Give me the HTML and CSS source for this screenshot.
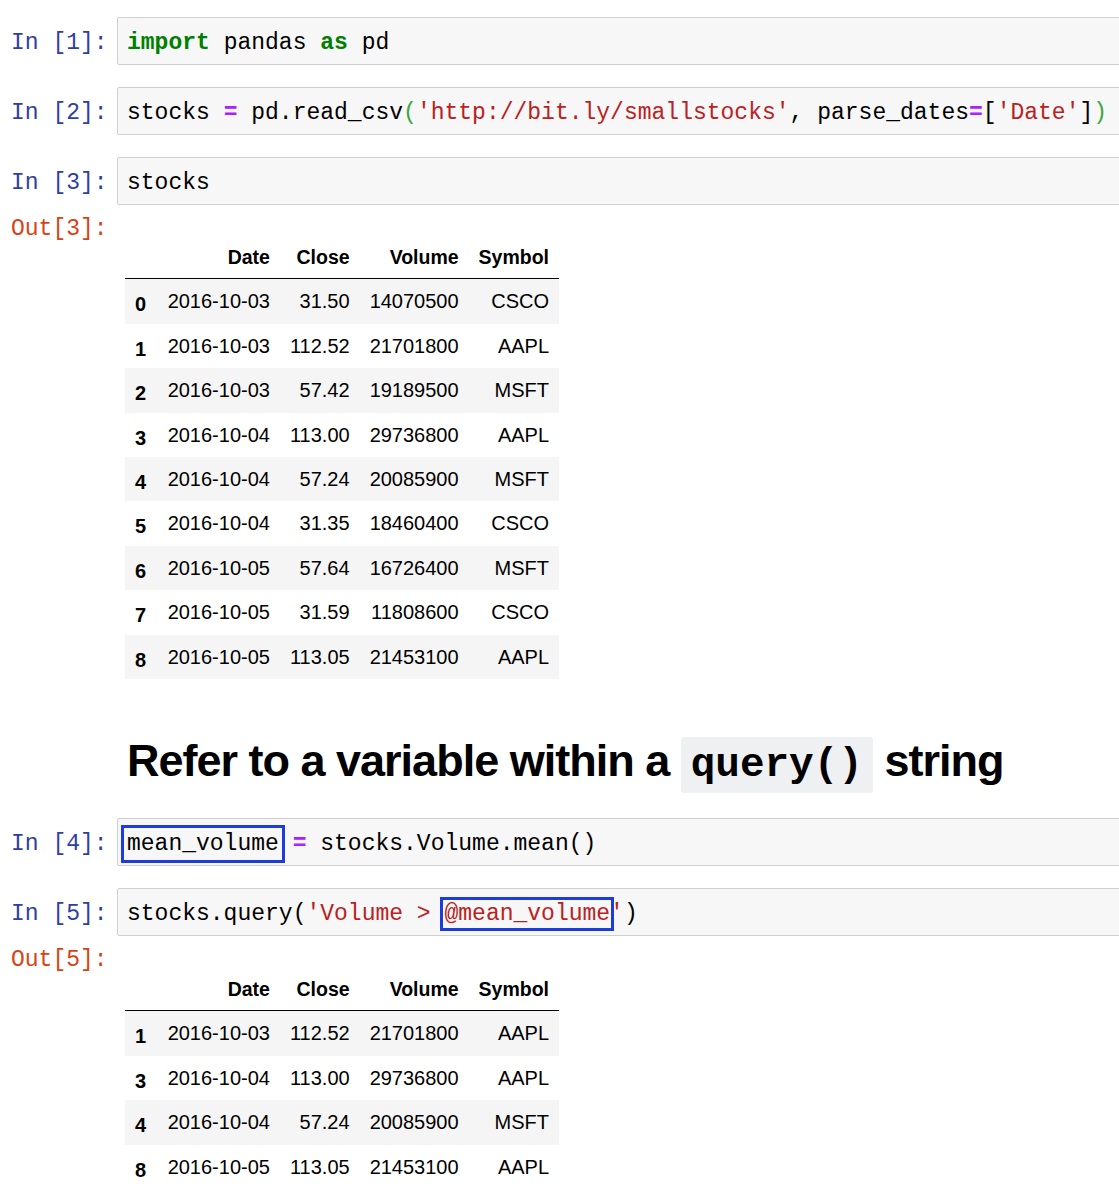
FILE: index.html
```html
<!DOCTYPE html>
<html>
<head>
<meta charset="utf-8">
<link rel="stylesheet" href="styles.css">
</head>
<body>
<div class="nb">
  <div class="cell">
    <div class="prompt in">In&nbsp;[1]:</div>
    <div class="code"><span class="kw">import</span> pandas <span class="kw">as</span> pd</div>
  </div>
  <div class="cell">
    <div class="prompt in">In&nbsp;[2]:</div>
    <div class="code">stocks <span class="op">=</span> pd.read_csv<span class="mb">(</span><span class="str">'http://bit.ly/smallstocks'</span>, parse_dates<span class="op">=</span>[<span class="str">'Date'</span>]<span class="mb">)</span></div>
  </div>
  <div class="cell">
    <div class="prompt in">In&nbsp;[3]:</div>
    <div class="code">stocks</div>
  </div>
  <div class="output">
    <div class="prompt out">Out[3]:</div>
    <div class="result">
      <table class="df">
        <thead>
          <tr><th></th><th>Date</th><th>Close</th><th>Volume</th><th>Symbol</th></tr>
        </thead>
        <tbody>
          <tr><th>0</th><td>2016-10-03</td><td>31.50</td><td>14070500</td><td>CSCO</td></tr>
          <tr><th>1</th><td>2016-10-03</td><td>112.52</td><td>21701800</td><td>AAPL</td></tr>
          <tr><th>2</th><td>2016-10-03</td><td>57.42</td><td>19189500</td><td>MSFT</td></tr>
          <tr><th>3</th><td>2016-10-04</td><td>113.00</td><td>29736800</td><td>AAPL</td></tr>
          <tr><th>4</th><td>2016-10-04</td><td>57.24</td><td>20085900</td><td>MSFT</td></tr>
          <tr><th>5</th><td>2016-10-04</td><td>31.35</td><td>18460400</td><td>CSCO</td></tr>
          <tr><th>6</th><td>2016-10-05</td><td>57.64</td><td>16726400</td><td>MSFT</td></tr>
          <tr><th>7</th><td>2016-10-05</td><td>31.59</td><td>11808600</td><td>CSCO</td></tr>
          <tr><th>8</th><td>2016-10-05</td><td>113.05</td><td>21453100</td><td>AAPL</td></tr>
        </tbody>
      </table>
    </div>
  </div>

  <h2 class="heading">Refer to a variable within a <code class="hcode">query()</code> string</h2>

  <div class="cell">
    <div class="prompt in">In&nbsp;[4]:</div>
    <div class="code"><span class="mark mark1">mean_volume</span> <span class="op">=</span> stocks.Volume.mean()</div>
  </div>
  <div class="cell">
    <div class="prompt in">In&nbsp;[5]:</div>
    <div class="code">stocks.query(<span class="str">'Volume &gt; <span class="mark mark2">@mean_volume</span>'</span>)</div>
  </div>
  <div class="output">
    <div class="prompt out">Out[5]:</div>
    <div class="result result-low">
      <table class="df">
        <thead>
          <tr><th></th><th>Date</th><th>Close</th><th>Volume</th><th>Symbol</th></tr>
        </thead>
        <tbody>
          <tr><th>1</th><td>2016-10-03</td><td>112.52</td><td>21701800</td><td>AAPL</td></tr>
          <tr><th>3</th><td>2016-10-04</td><td>113.00</td><td>29736800</td><td>AAPL</td></tr>
          <tr><th>4</th><td>2016-10-04</td><td>57.24</td><td>20085900</td><td>MSFT</td></tr>
          <tr><th>8</th><td>2016-10-05</td><td>113.05</td><td>21453100</td><td>AAPL</td></tr>
        </tbody>
      </table>
    </div>
  </div>
</div>
</body>
</html>
```

FILE: styles.css
```css
html, body {
  margin: 0;
  padding: 0;
  background: #ffffff;
  overflow: hidden;
}

.nb {
  width: 1119px;
  overflow: hidden;
  padding-top: 17px;
}

.cell {
  display: flex;
  margin-bottom: 22px;
}

.cell + .output {
  margin-top: -22px;
}

.prompt {
  flex: none;
  width: 106px;
  padding-left: 11px;
  font-family: "Liberation Mono", monospace;
  font-size: 23px;
  line-height: 26px;
  white-space: nowrap;
}

.cell .prompt {
  padding-top: 13px;
}

.in {
  color: #303F9F;
}

.out {
  color: #D84315;
  padding-top: 11px;
}

.code {
  flex: none;
  width: 1040px;
  box-sizing: border-box;
  background: #f7f7f7;
  border: 1px solid #cfcfcf;
  border-radius: 2px;
  padding: 12px 9px 8px;
  font-family: "Liberation Mono", monospace;
  font-size: 23px;
  line-height: 26px;
  color: #000;
  white-space: pre;
}

.kw {
  color: #008000;
  font-weight: bold;
}

.op {
  color: #AA22FF;
  font-weight: bold;
}

.str {
  color: #BA2121;
}

.mb {
  color: #3aa63a;
}

.mark {
  outline: 3px solid #1c3ddc;
}

.mark1 {
  outline-offset: 3px;
}

.mark2 {
  outline-offset: 1px;
}

.output {
  display: flex;
}

.result {
  padding-top: 30px;
  padding-left: 8px;
}

.result-low {
  padding-top: 31px;
}

.df {
  border-collapse: collapse;
  border-spacing: 0;
  font-family: "Liberation Sans", Arial, sans-serif;
  font-size: 20px;
  color: #000;
}

.df th,
.df td {
  padding: 10px 10px;
  line-height: 24.4px;
  text-align: right;
  vertical-align: middle;
  white-space: nowrap;
}

.df th {
  font-weight: bold;
}

.df thead th {
  font-size: 19.5px;
  line-height: 24.4px;
  border-bottom: 1px solid #000;
  padding-bottom: 9px;
}

.df thead tr {
  border-bottom: 1px solid #000;
}

.df tbody th {
  text-align: left;
  padding-top: 13px;
  padding-bottom: 7px;
  padding-right: 11.5px;
}

.df tbody tr:nth-child(odd) {
  background: #f5f5f5;
}

.heading {
  margin: 54px 0 25px 127px;
  font-family: "Liberation Sans", Arial, sans-serif;
  font-weight: bold;
  font-size: 45px;
  letter-spacing: -1px;
  line-height: 56px;
  color: #000;
  white-space: nowrap;
}

.hcode {
  display: inline-block;
  background: #eff0f1;
  border-radius: 3px;
  padding: 0 10px;
  font-family: "Liberation Mono", monospace;
  font-weight: bold;
  font-size: 41px;
  letter-spacing: 0;
  line-height: 56px;
  vertical-align: baseline;
}
```
